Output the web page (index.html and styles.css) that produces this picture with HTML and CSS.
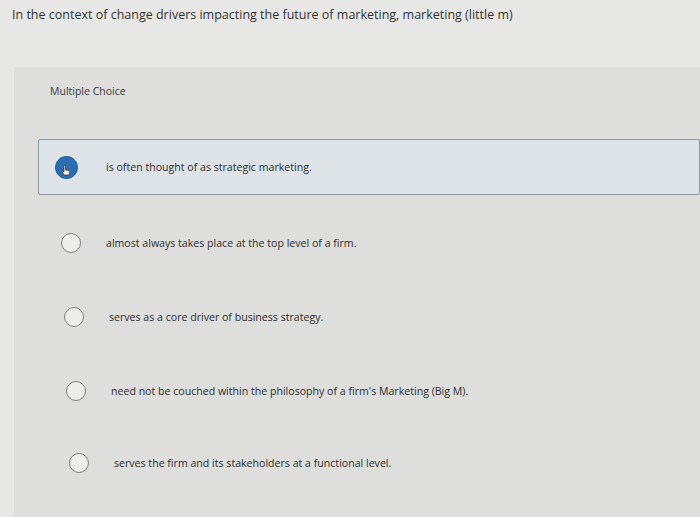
FILE: index.html
```html
<!DOCTYPE html>
<html>
<head>
<meta charset="utf-8">
<link rel="stylesheet" href="styles.css">
</head>
<body>
<div class="page">
  <p class="question">In the context of change drivers impacting the future of marketing, marketing (little m)</p>
  <div class="panel">
    <div class="label">Multiple Choice</div>
    <div class="options">
      <div class="option selected">
        <span class="radio filled">
          <svg width="14" height="14" viewBox="0 0 14 14"><path d="M5 12 L3 8.5 Q2.8 7.8 3.6 7.9 L5 9.2 L5 3 Q5 2.2 5.8 2.2 Q6.6 2.2 6.6 3 L6.6 7 L10 7.6 Q11 7.9 10.8 9 L10 12 Z" fill="#fff" stroke="#333" stroke-width="0.8"/></svg>
        </span>
        <span class="text">is often thought of as strategic marketing.</span>
      </div>
      <div class="option o2">
        <span class="radio"></span>
        <span class="text">almost always takes place at the top level of a firm.</span>
      </div>
      <div class="option o3">
        <span class="radio"></span>
        <span class="text">serves as a core driver of business strategy.</span>
      </div>
      <div class="option o4">
        <span class="radio"></span>
        <span class="text">need not be couched within the philosophy of a firm's Marketing (Big M).</span>
      </div>
      <div class="option o5">
        <span class="radio"></span>
        <span class="text">serves the firm and its stakeholders at a functional level.</span>
      </div>
    </div>
  </div>
</div>
</body>
</html>
```

FILE: styles.css
```css
html, body {
  margin: 0;
  padding: 0;
}
body {
  background: #e7e7e5;
  font-family: "Open Sans", "Liberation Sans", sans-serif;
  color: #2e2e2e;
  width: 700px;
  height: 517px;
  overflow: hidden;
}
.page {
  padding: 6px 0 0 12px;
}
.question {
  margin: 0;
  font-size: 12.5px;
  line-height: 18px;
  color: #333;
}
.panel {
  margin-top: 43px;
  margin-left: 2px;
  background: #dededc;
  height: 450px;
  padding-top: 17px;
}
.label {
  font-size: 10.5px;
  color: #3a3a3a;
  padding-left: 36px;
  line-height: 14px;
}
.options {
  margin-top: 41px;
  display: flex;
  flex-direction: column;
  gap: 19px;
  padding-left: 24px;
}
.option {
  display: flex;
  align-items: center;
  height: 55px;
  box-sizing: border-box;
  padding-left: 46px;
  position: relative;
}
.option .text {
  font-size: 10.6px;
  color: #2f2f2f;
  margin-left: 26px;
}
.option.selected {
  background: #dee3e7;
  border: 1px solid #8f9aa5;
  border-radius: 2px;
  padding-left: 16px;
  height: 56px;
}
.option.selected .text {
  margin-left: 28px;
}
.radio {
  width: 20px;
  height: 20px;
  border: 1.3px solid #808080;
  border-radius: 50%;
  box-sizing: border-box;
  background: #ededeb;
  display: inline-flex;
  align-items: center;
  justify-content: center;
  flex: none;
}
.radio.filled {
  width: 23px;
  height: 23px;
  background: #2b6cb3;
  border: 1px solid #1d5898;
}
.radio.filled svg {
  margin: 6px 0 0 -2px;
}
.o2 { padding-left: 23px; margin-top: 1px; }
.o2 .text { margin-left: 25px; }
.o3 { padding-left: 26px; }
.o3 .text { margin-left: 25px; }
.o4 { padding-left: 28px; }
.o4 .text { margin-left: 25px; }
.o5 { padding-left: 31px; margin-top: -2px; }
.o5 .text { margin-left: 25px; }
```
